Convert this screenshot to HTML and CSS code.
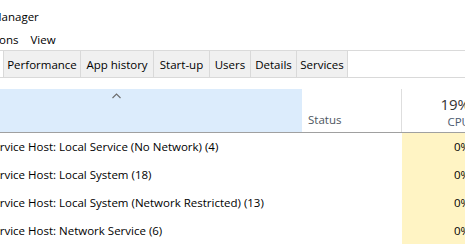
FILE: index.html
```html
<!DOCTYPE html>
<html>
<head>
<meta charset="utf-8">
<link rel="stylesheet" href="styles.css">
</head>
<body>
<div class="window">
  <div class="title"><span class="title-text">Task Manager</span></div>
  <div class="menu">
    <span class="menu-item menu-cut">Options</span>
    <span class="menu-item">View</span>
  </div>
  <div class="tabs">
    <div class="tab tab-selected"><span class="tab-hidden-label">Processes</span></div>
    <div class="tab">Performance</div>
    <div class="tab">App history</div>
    <div class="tab">Start-up</div>
    <div class="tab">Users</div>
    <div class="tab">Details</div>
    <div class="tab">Services</div>
  </div>
  <div class="table">
    <div class="head">
      <div class="hcell hname">
        <svg class="caret" width="9" height="6" viewBox="0 0 9 6"><polyline points="0.5,5 4.5,1 8.5,5" fill="none" stroke="#6b6b6b" stroke-width="1.1"/></svg>
      </div>
      <div class="hcell hstatus">Status</div>
      <div class="hcell hcpu"><div class="pct">19%</div><div class="lbl">CPU</div></div>
    </div>
    <div class="row">
      <div class="cell name"><span class="name-text">Service Host: Local Service (No Network) (4)</span></div>
      <div class="cell status"></div>
      <div class="cell cpu">0%</div>
    </div>
    <div class="row">
      <div class="cell name"><span class="name-text">Service Host: Local System (18)</span></div>
      <div class="cell status"></div>
      <div class="cell cpu">0%</div>
    </div>
    <div class="row">
      <div class="cell name"><span class="name-text">Service Host: Local System (Network Restricted) (13)</span></div>
      <div class="cell status"></div>
      <div class="cell cpu">0%</div>
    </div>
    <div class="row">
      <div class="cell name"><span class="name-text">Service Host: Network Service (6)</span></div>
      <div class="cell status"></div>
      <div class="cell cpu">0%</div>
    </div>
  </div>
</div>
</body>
</html>
```
FILE: styles.css
```css
html, body {
  margin: 0;
  padding: 0;
  background: #ffffff;
  overflow: hidden;
}
body {
  width: 465px;
  height: 244px;
  font-family: "Open Sans", "Noto Sans", sans-serif;
  font-size: 11.5px;
  color: #000;
}
.window {
  width: 475px;
}
.title {
  height: 28px;
  display: flex;
  align-items: center;
  white-space: nowrap;
}
.title-text {
  margin-left: -36px;
  padding-top: 4px;
}
.menu {
  height: 22px;
  display: flex;
  align-items: center;
  white-space: nowrap;
}
.menu-item {
  padding: 0 6px;
}
.menu-cut {
  margin-left: -30px;
}
.tabs {
  display: grid;
  grid-template-columns: 3px 77px 73px 56px 41px 46px 52px 1fr;
  height: 26px;
  border-top: 1px solid #dadada;
  border-bottom: 1px solid #d9d9d9;
  white-space: nowrap;
}
.tab {
  background: #f0f0f0;
  border-left: 1px solid #d9d9d9;
  display: flex;
  align-items: center;
  justify-content: center;
}
.tab:last-child {
  border-right: 1px solid #d9d9d9;
}
.tab-selected {
  background: #fff;
  border-left: none;
  overflow: hidden;
  justify-content: flex-end;
}
.tab-hidden-label {
  margin-right: 10px;
}
.table {
  margin-top: 11px;
}
.head {
  display: grid;
  grid-template-columns: 302px 99px 74px;
  height: 43px;
  border-bottom: 1px solid #a0a0a0;
}
.hname {
  background: #dcecfc;
  position: relative;
}
.caret {
  position: absolute;
  left: 112px;
  top: 4px;
}
.hstatus {
  display: flex;
  align-items: flex-end;
  padding: 0 0 5px 6px;
  color: #4d5560;
}
.hcpu {
  border-left: 1px solid #dedede;
  display: flex;
  flex-direction: column;
  align-items: flex-end;
  padding-right: 5px;
}
.pct {
  font-size: 15px;
  color: #333;
  margin-top: 5px;
  line-height: 20px;
}
.lbl {
  color: #4c5a70;
  line-height: 16px;
}
.row {
  display: grid;
  grid-template-columns: 302px 99px 74px;
  height: 28px;
}
.cell {
  display: flex;
  align-items: center;
  white-space: nowrap;
  padding-bottom: 2px;
}
.name-text {
  margin-left: -13px;
}
.cpu {
  background: #fff4c4;
  margin-left: 1px;
  justify-content: flex-end;
  padding-right: 5px;
}
```
